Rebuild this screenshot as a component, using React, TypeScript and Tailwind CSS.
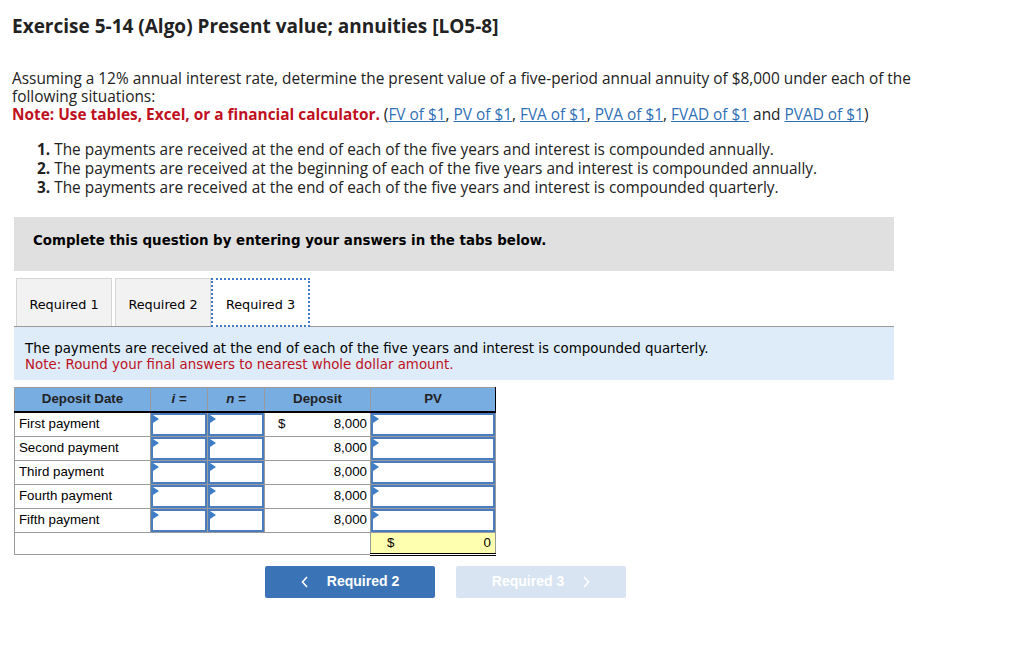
import React from "react";

const body = { fontFamily: '"Open Sans", "Liberation Sans", sans-serif' };
const verdana = { fontFamily: '"DejaVu Sans", Verdana, sans-serif' };
const arial = { fontFamily: '"Liberation Sans", Arial, sans-serif' };

const links = ["FV of $1", "PV of $1", "FVA of $1", "PVA of $1"];
const rows = ["First payment", "Second payment", "Third payment", "Fourth payment", "Fifth payment"];

const Flag = () => (
  <svg className="absolute left-0 top-0" width="6" height="8" viewBox="0 0 6 8">
    <path d="M0 0 L6 4 L0 8 Z" fill="#3d7cc9" />
  </svg>
);

const InputCell = ({ w }: { w: string }) => (
  <td className={`p-0 border border-[#9a9a9a] ${w}`}>
    <div className="relative h-[23px] border-2 border-[#4a7cc0] bg-white">
      <Flag />
    </div>
  </td>
);

const App = () => {
  return (
    <div className="w-[1024px] h-[656px] bg-white text-[#222]" style={body}>
      <h1 className="pl-[12px] pt-[14px] text-[19px] leading-[24px] font-bold">
        Exercise 5-14 (Algo) Present value; annuities [LO5-8]
      </h1>

      <div className="pl-[12px] mt-[32px] text-[15.4px] leading-[18px] pr-[100px]">
        <p>
          Assuming a 12% annual interest rate, determine the present value of a five-period annual annuity of $8,000 under
          each of the following situations:
        </p>
        <p>
          <span className="font-bold text-[#c0101e]">Note: Use tables, Excel, or a financial calculator.</span> (
          {links.map((l) => (
            <React.Fragment key={l}>
              <span className="text-[#2f6fb6] underline">{l}</span>,{" "}
            </React.Fragment>
          ))}
          <span className="text-[#2f6fb6] underline">FVAD of $1</span> and{" "}
          <span className="text-[#2f6fb6] underline">PVAD of $1</span>)
        </p>
      </div>

      <ol className="pl-[37px] mt-[16px] text-[15.4px] leading-[19px]">
        <li>
          <b>1.</b> The payments are received at the end of each of the five years and interest is compounded annually.
        </li>
        <li>
          <b>2.</b> The payments are received at the beginning of each of the five years and interest is compounded
          annually.
        </li>
        <li>
          <b>3.</b> The payments are received at the end of each of the five years and interest is compounded quarterly.
        </li>
      </ol>

      <div className="ml-[14px] w-[880px]">
        <div className="mt-[20px] h-[54px] bg-[#e0e0e0] flex items-center pl-[19px] pb-[6px]" style={verdana}>
          <span className="text-[13.4px] font-bold text-black">
            Complete this question by entering your answers in the tabs below.
          </span>
        </div>

        <div className="mt-[8px] flex items-end h-[48px] border-b border-[#9a9a9a] pl-[2px]" style={verdana}>
          <div className="h-[48px] w-[96px] pt-[5px] bg-[#f2f2f2] border border-b-0 border-[#d6d6d6] flex items-center justify-center text-[12.8px] text-black">
            Required 1
          </div>
          <div className="ml-[3px] h-[48px] w-[96px] pt-[5px] bg-[#f2f2f2] border border-b-0 border-[#d6d6d6] flex items-center justify-center text-[12.8px] text-black">
            Required 2
          </div>
          <div className="h-[49px] -mb-px w-[99px] pt-[5px] bg-white border-2 border-dotted border-[#3f7cc8] flex items-center justify-center text-[12.8px] text-black">
            Required 3
          </div>
        </div>

        <div className="h-[53px] bg-[#ddecf8] pl-[11px] pt-[14px] text-[13.4px] leading-[16px]" style={verdana}>
          <p className="text-black">
            The payments are received at the end of each of the five years and interest is compounded quarterly.
          </p>
          <p className="text-[#c0101e]">Note: Round your final answers to nearest whole dollar amount.</p>
        </div>

        <table className="mt-[7px] border-collapse text-[13.3px] text-black" style={arial}>
          <thead>
            <tr className="h-[24px] bg-[#78ade2] border-b-2 border-black">
              <th className="w-[136px] border border-[#9a9a9a] font-bold text-[#222]">Deposit Date</th>
              <th className="w-[57px] border border-[#9a9a9a] font-bold italic text-[#222]">i =</th>
              <th className="w-[57px] border border-[#9a9a9a] font-bold italic text-[#222]">n =</th>
              <th className="w-[106px] border border-[#9a9a9a] font-bold text-[#222]">Deposit</th>
              <th className="w-[125px] border border-[#9a9a9a] border-r-black font-bold text-[#222]">PV</th>
            </tr>
          </thead>
          <tbody>
            {rows.map((r, i) => (
              <tr key={r} className="h-[24px]">
                <td className="border border-[#9a9a9a] pl-[4px] text-left">{r}</td>
                <InputCell w="w-[57px]" />
                <InputCell w="w-[57px]" />
                <td className="border border-[#9a9a9a] px-[3px]">
                  <div className="flex justify-between">
                    <span className="pl-[10px]">{i === 0 ? "$" : ""}</span>
                    <span>8,000</span>
                  </div>
                </td>
                <InputCell w="w-[125px]" />
              </tr>
            ))}
            <tr className="h-[22px]">
              <td colSpan={4} className="border border-[#9a9a9a]" />
              <td className="border border-[#9a9a9a] border-b-[3px] border-b-black border-double bg-[#ffffb0] px-[4px]">
                <div className="flex justify-between">
                  <span className="pl-[12px]">$</span>
                  <span>0</span>
                </div>
              </td>
            </tr>
          </tbody>
        </table>

        <div className="mt-[10px] ml-[251px] flex gap-[21px]" style={arial}>
          <button className="w-[170px] h-[32px] rounded-[2px] bg-[#3a74b7] text-white font-bold text-[14px] flex items-center justify-center gap-[18px]">
            <svg width="8" height="12" viewBox="0 0 8 12">
              <path d="M6 1 L1.5 6 L6 11" stroke="white" strokeWidth="1.6" fill="none" />
            </svg>
            Required 2
          </button>
          <button className="w-[170px] h-[32px] rounded-[2px] bg-[#d8e4f1] text-white font-bold text-[14px] flex items-center justify-center gap-[18px]">
            Required 3
            <svg width="8" height="12" viewBox="0 0 8 12">
              <path d="M2 1 L6.5 6 L2 11" stroke="white" strokeWidth="1.6" fill="none" />
            </svg>
          </button>
        </div>
      </div>
    </div>
  );
};

export default App;
